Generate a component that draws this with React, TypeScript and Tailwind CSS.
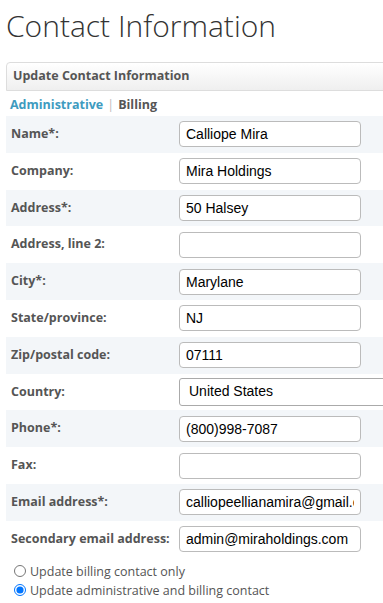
import React from "react";

type Field = { label: string; value: string; select?: boolean };

const fields: Field[] = [
  { label: "Name*:", value: "Calliope Mira" },
  { label: "Company:", value: "Mira Holdings" },
  { label: "Address*:", value: "50 Halsey" },
  { label: "Address, line 2:", value: "" },
  { label: "City*:", value: "Marylane" },
  { label: "State/province:", value: "NJ" },
  { label: "Zip/postal code:", value: "07111" },
  { label: "Country:", value: "United States", select: true },
  { label: "Phone*:", value: "(800)998-7087" },
  { label: "Fax:", value: "" },
  { label: "Email address*:", value: "calliopeellianamira@gmail.com" },
  { label: "Secondary email address:", value: "admin@miraholdings.com" },
];

const sans = "font-['Open_Sans',sans-serif]";

export default function App() {
  return (
    <div className={`${sans} w-[383px] h-[603px] overflow-hidden bg-white`}>
      <h1 className="pl-[6px] pt-[6px] text-[30px] leading-[40px] font-light text-[#333]">
        Contact Information
      </h1>

      <div className="ml-[6px] mt-[16px] -mr-4 h-[29px] flex items-center pl-[6px] border border-[#ddd] rounded-tl-[4px] bg-gradient-to-b from-white to-[#efefef]">
        <span className="text-[12.5px] font-bold text-[#555]">
          Update Contact Information
        </span>
      </div>

      <div className="ml-[10px] mt-[3px] h-[22px] flex items-center text-[12.5px] font-bold">
        <span className="text-[#3e9bbf]">Administrative</span>
        <span className="mx-[4px] font-normal text-[#bbb]">|</span>
        <span className="text-[#555]">Billing</span>
      </div>

      <div className="ml-[6px] mt-0">
        {fields.map((f, i) => (
          <div
            key={f.label}
            className={`h-[36.8px] flex items-center ${i % 2 === 0 ? "bg-[#f3f6f9]" : "bg-white"}`}
          >
            <label className="w-[173px] shrink-0 pl-[5px] text-[12.5px] font-bold text-[#555] whitespace-nowrap">
              {f.label}
            </label>
            {f.select ? (
              <div className="h-[28px] w-[220px] shrink-0 flex items-center pl-[9px] border border-[#aaa] rounded-[3px] bg-white font-['Liberation_Sans',Arial,sans-serif] text-[14px] text-black">
                {f.value}
              </div>
            ) : (
              <input
                readOnly
                value={f.value}
                className="h-[26px] w-[182px] shrink-0 px-[6px] border border-[#bbb] rounded-[4px] bg-white font-['Liberation_Sans',Arial,sans-serif] text-[14px] text-black outline-none"
              />
            )}
          </div>
        ))}
      </div>

      <div className="ml-[14px] mt-[4px] flex flex-col text-[12.5px] text-[#555] leading-[19px]">
        <label className="flex items-center gap-[4px]">
          <input type="radio" name="scope" className="m-0 w-[12px] h-[12px]" />
          Update billing contact only
        </label>
        <label className="flex items-center gap-[4px]">
          <input type="radio" name="scope" defaultChecked className="m-0 w-[12px] h-[12px]" />
          Update administrative and billing contact
        </label>
      </div>
    </div>
  );
}
